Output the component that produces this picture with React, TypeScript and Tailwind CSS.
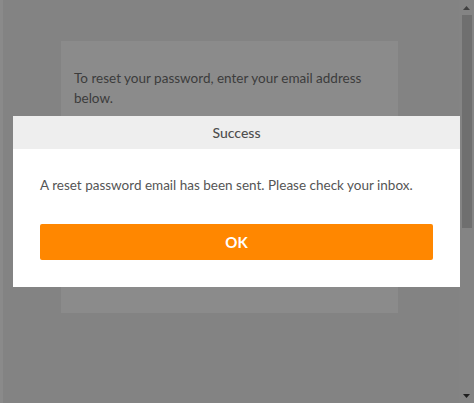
import React from 'react';

const FONT = { fontFamily: 'Lato, "Open Sans", Arial, sans-serif' };

function Scrollbar() {
  return (
    <div className="flex w-[15px] shrink-0 flex-col items-center bg-[#848484]">
      <div className="flex h-[15px] items-center justify-center">
        <svg width="7" height="4" viewBox="0 0 7 4">
          <path d="M0 4 L3.5 0 L7 4 Z" fill="#3f3f3f" />
        </svg>
      </div>
      <div className="h-[213px] w-[10px] bg-[#6f6f6f]" />
      <div className="flex-1" />
      <div className="flex h-[15px] items-center justify-center">
        <svg width="7" height="4" viewBox="0 0 7 4">
          <path d="M0 0 L7 0 L3.5 4 Z" fill="#1f1f1f" />
        </svg>
      </div>
    </div>
  );
}

export default function App() {
  return (
    <div className="relative flex h-[403px] w-[474px] overflow-hidden bg-[#838383]" style={FONT}>
      {/* page behind the overlay */}
      <div className="flex flex-1 border-l-[3px] border-[#8a8a8a] pt-[41px] pl-[58px]">
        <div className="h-[272px] w-[337px] bg-[#8b8b8b] px-[13px] pt-[27px]">
          <p className="text-[13.5px] leading-[20px] text-[#3c3c3c]">
            To reset your password, enter your email address below.
          </p>
        </div>
      </div>
      <Scrollbar />

      {/* success dialog */}
      <div className="absolute left-[13px] top-[116px] w-[447px] bg-white">
        <div className="flex h-[33px] items-center justify-center bg-[#eeeeee]">
          <span className="text-[14px] font-medium text-[#4f4f4f]">Success</span>
        </div>
        <div className="px-[27px] pt-[26px] pb-[27px]">
          <p className="whitespace-nowrap text-[13.5px] leading-[20px] text-[#555555]">
            A reset password email has been sent. Please check your inbox.
          </p>
          <button className="mt-[29px] flex h-[36px] w-full items-center justify-center rounded-[2px] bg-[#ff8700] text-[15px] font-bold text-white">
            OK
          </button>
        </div>
      </div>
    </div>
  );
}
